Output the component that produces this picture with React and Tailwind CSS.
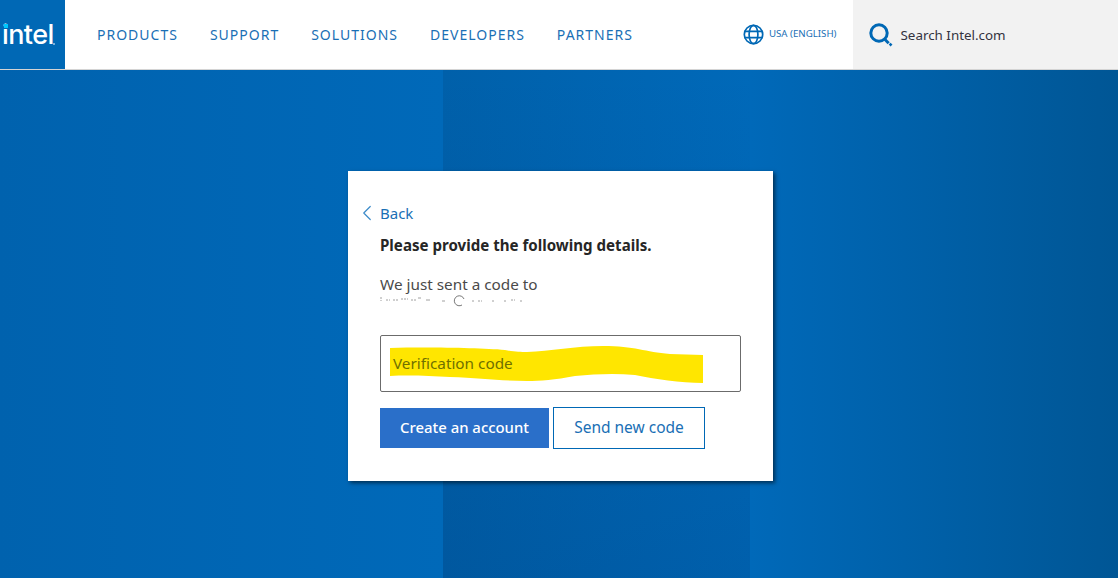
import { ChevronLeft } from 'lucide-react';

const links = ['PRODUCTS', 'SUPPORT', 'SOLUTIONS', 'DEVELOPERS', 'PARTNERS'];

function GlobeIcon() {
  return (
    <svg width="21" height="21" viewBox="0 0 21 21" fill="none" stroke="#0068b5" strokeWidth="1.7">
      <circle cx="10.5" cy="10.5" r="9.2" />
      <ellipse cx="10.5" cy="10.5" rx="4.4" ry="9.2" />
      <path d="M1.5 7.4h18M1.5 13.6h18" />
    </svg>
  );
}

function SearchIcon() {
  return (
    <svg width="24" height="24" viewBox="0 0 24 24" fill="none" stroke="#0068b5">
      <circle cx="10" cy="10" r="8.2" strokeWidth="3" />
      <path d="M15.5 16l4.2 4.2" strokeWidth="3" />
      <rect x="20.3" y="20.3" width="2.6" height="2.6" fill="#0068b5" stroke="none" transform="rotate(45 21.6 21.6)" />
    </svg>
  );
}

export default function App() {
  return (
    <div className="h-[578px] w-[1118px] flex flex-col overflow-hidden font-['Noto_Sans',sans-serif]">
      <header className="flex h-[70px] shrink-0 border-b border-[#d4d4d4] bg-white">
        <div className="relative flex w-[65px] items-center bg-[#0068b5] pb-[1px] pl-[2px]">
          <span className="font-['Inter',sans-serif] text-[27px] font-medium leading-none tracking-[-0.6px] text-white">intel</span>
          <span className="absolute left-[4px] top-[24px] h-1 w-1 bg-[#00c7fd]" />
          <span className="absolute left-[53px] top-[43px] h-[2px] w-[2px] rounded-full bg-[#9ec9ea]" />
        </div>
        <nav className="ml-8 flex items-center gap-8">
          {links.map((l) => (
            <a key={l} className="text-sm tracking-[1px] text-[#1a6fb5]">{l}</a>
          ))}
        </nav>
        <div className="ml-[110px] flex items-center gap-[5px]">
          <GlobeIcon />
          <span className="text-[9.7px] text-[#1a6fb5]">USA (ENGLISH)</span>
        </div>
        <div className="ml-[17px] flex flex-1 items-center gap-[7px] bg-[#f2f2f2] pl-4">
          <SearchIcon />
          <span className="pt-0.5 text-[13.4px] text-[#33333f]">Search Intel.com</span>
        </div>
      </header>

      <main className="flex flex-1 items-start justify-center pl-[3px] pt-[101px] bg-no-repeat bg-[linear-gradient(180deg,#00286000_0%,#00286026_100%),linear-gradient(90deg,#0062ae_0px,#0069b9_443px,#0060aa_443px,#0069b9_750px,#0069b9_750px,#005695_1118px)] [background-size:307px_100%,100%_100%] [background-position:443px_0,0_0]">
        <div className="h-[310px] w-[425px] bg-white px-8 pt-8 shadow-[2px_2px_4px_rgba(0,0,0,0.55)]">
          <a className="-ml-[26px] flex h-5 items-center text-[15px] text-[#1a6fb5]">
            <ChevronLeft size={26} strokeWidth={1.1} className="shrink-0 text-[#3b8ac9]" />
            Back
          </a>
          <h1 className="mt-3 text-[15.1px] font-bold leading-5 text-[#262626]">Please provide the following details.</h1>
          <p className="mt-[19px] text-[15.3px] leading-5 text-[#4a4a4a]">We just sent a code to</p>
          <svg width="150" height="14" viewBox="0 0 150 14" className="block" fill="none" stroke="#a0a0a0">
            <path d="M1 3v4M6 6h4M13 6h5M21 5h7M31 6h5" strokeWidth="1" strokeDasharray="2 1" />
            <path d="M38 4h3M46 6h4M62 7h3" strokeWidth="1" />
            <path d="M84 5a5 5 0 1 0-2 6" stroke="#777" strokeWidth="1" />
            <path d="M92 7h3M98 7h4M112 7h3M124 7h2M131 6h4M140 7h3" strokeWidth="1" strokeDasharray="2 1" />
          </svg>

          <div className="relative mt-[27px] flex h-[57px] w-[361px] items-center rounded-[2px] border border-[#6b6b6b] pl-[12px]">
            <svg width="314" height="39" viewBox="0 0 314 39" className="absolute left-[9px] top-[9px]">
              <path
                d="M0 3C40 2 90 3 115 5C125 7 130 7 137 7C160 6 185 1 213 1C245 1 255 7 280 9L313 10V38C290 38 265 34 245 30C225 28 205 29 185 31C165 35 150 36 137 36C110 36 90 33 60 32C40 31 20 30 0 31Z"
                fill="#ffe600"
              />
            </svg>
            <span className="relative text-[15.3px] text-[#6f7000]">Verification code</span>
          </div>

          <div className="mt-[15px] flex items-center gap-1">
            <button className="h-10 w-[169px] bg-[#2a6fc9] pb-0.5 text-[14.9px] font-medium text-white">Create an account</button>
            <button className="h-[42px] w-[152px] border border-[#0068b5] text-[15.5px] text-[#1a6fb5]">Send new code</button>
          </div>
        </div>
      </main>
    </div>
  );
}
